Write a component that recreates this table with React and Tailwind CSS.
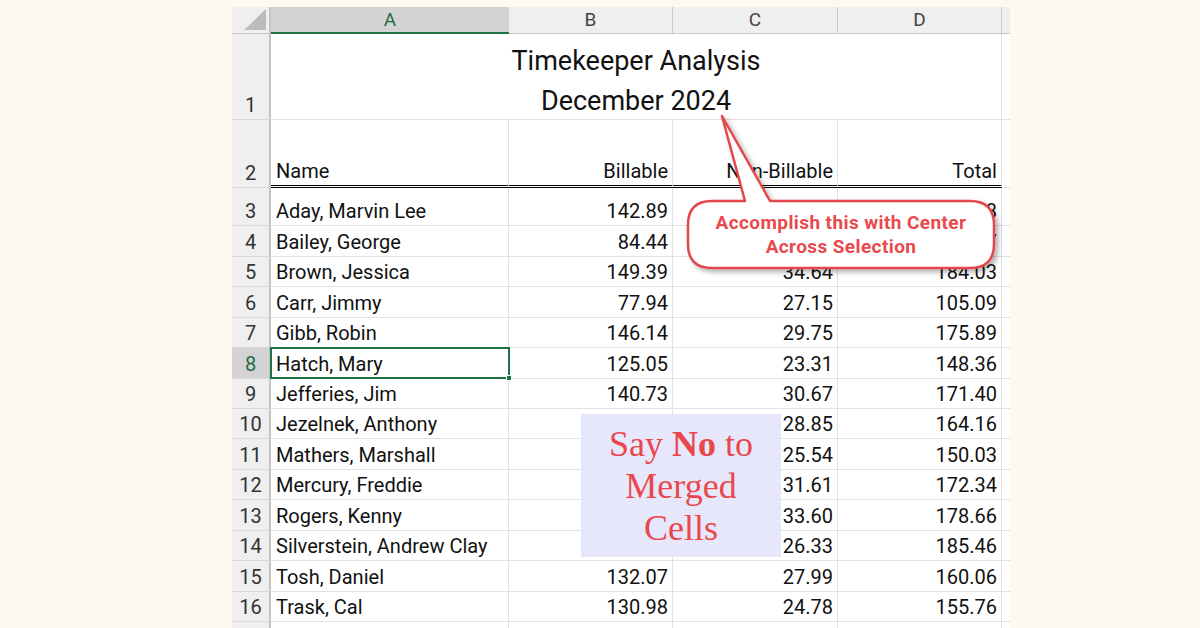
const rows = [
  { n: 3, name: 'Aday, Marvin Lee', b: '142.89', c: '30.59', d: '173.48', h: 'h-[38px]' },
  { n: 4, name: 'Bailey, George', b: '84.44', c: '22.43', d: '106.87', h: 'h-[31px]' },
  { n: 5, name: 'Brown, Jessica', b: '149.39', c: '34.64', d: '184.03', h: 'h-[30px]' },
  { n: 6, name: 'Carr, Jimmy', b: '77.94', c: '27.15', d: '105.09', h: 'h-[31px]' },
  { n: 7, name: 'Gibb, Robin', b: '146.14', c: '29.75', d: '175.89', h: 'h-[30px]' },
  { n: 8, name: 'Hatch, Mary', b: '125.05', c: '23.31', d: '148.36', h: 'h-[31px]', sel: true },
  { n: 9, name: 'Jefferies, Jim', b: '140.73', c: '30.67', d: '171.40', h: 'h-[30px]' },
  { n: 10, name: 'Jezelnek, Anthony', b: '135.31', c: '28.85', d: '164.16', h: 'h-[30px]' },
  { n: 11, name: 'Mathers, Marshall', b: '124.49', c: '25.54', d: '150.03', h: 'h-[31px]' },
  { n: 12, name: 'Mercury, Freddie', b: '140.73', c: '31.61', d: '172.34', h: 'h-[30px]' },
  { n: 13, name: 'Rogers, Kenny', b: '145.06', c: '33.60', d: '178.66', h: 'h-[31px]' },
  { n: 14, name: 'Silverstein, Andrew Clay', b: '159.13', c: '26.33', d: '185.46', h: 'h-[30px]' },
  { n: 15, name: 'Tosh, Daniel', b: '132.07', c: '27.99', d: '160.06', h: 'h-[31px]' },
  { n: 16, name: 'Trask, Cal', b: '130.98', c: '24.78', d: '155.76', h: 'h-[30px]' },
  { n: 0, name: '', b: '', c: '', d: '', h: 'h-[30px]' },
]

function RowHead({ n, sel, className = '' }) {
  return (
    <div
      className={`w-[39px] shrink-0 flex items-end justify-center pb-[2px] border-b border-r-2 border-b-[#d9d9d9] border-r-[#c4c4c4] leading-[24px] ${
        sel ? 'bg-[#d3d3d3] text-[#1d6b40]' : 'bg-[#efefef] text-[#333]'
      } ${className}`}
    >
      {n > 0 ? n : ''}
    </div>
  )
}

function Cell({ children, w, right, className = '' }) {
  return (
    <div
      className={`${w} shrink-0 flex items-end pb-[2px] border-b border-r border-[#e1e1e1] leading-[24px] whitespace-nowrap ${
        right ? 'justify-end pr-[4px]' : 'pl-[5px]'
      } ${className}`}
    >
      {children}
    </div>
  )
}

export default function App() {
  return (
    <div
      className="relative w-[1200px] h-[628px] overflow-hidden bg-[#fdf9f0] pt-[7px] pl-[232px] text-[20px] text-[#111]"
      style={{ fontFamily: 'Roboto, "Liberation Sans", sans-serif' }}
    >
      <div className="w-[778px] bg-white">
        {/* column headers */}
        <div className="flex h-[27px] text-[19px] text-[#444] leading-[24px]">
          <div className="relative w-[39px] shrink-0 bg-[#efefef] border-r-2 border-b border-[#c4c4c4]">
            <div className="absolute right-[3px] bottom-[3px] w-0 h-0 border-l-[22px] border-l-transparent border-b-[21px] border-b-[#bcbcbc]" />
          </div>
          <div className="w-[238px] shrink-0 flex items-center justify-center bg-[#d3d3d3] text-[#1d6b40] border-b-2 border-[#1f7246]">A</div>
          <div className="w-[164px] shrink-0 flex items-center justify-center bg-[#efefef] border-r border-b border-[#c9c9c9]">B</div>
          <div className="w-[165px] shrink-0 flex items-center justify-center bg-[#efefef] border-r border-b border-[#c9c9c9]">C</div>
          <div className="w-[164px] shrink-0 flex items-center justify-center bg-[#efefef] border-r border-b border-[#c9c9c9]">D</div>
          <div className="w-[8px] shrink-0 bg-[#efefef] border-b border-[#c9c9c9]" />
        </div>

        {/* row 1: title centered across selection */}
        <div className="flex h-[86px]">
          <RowHead n={1} />
          <div className="w-[731px] shrink-0 flex flex-col items-center justify-end border-b border-r border-[#e1e1e1] text-[27px] leading-[40px]">
            <div className="translate-y-[2px]">Timekeeper Analysis</div>
            <div className="translate-y-[2px]">December 2024</div>
          </div>
          <div className="w-[8px] shrink-0 border-b border-[#e1e1e1]" />
        </div>

        {/* row 2: column titles */}
        <div className="flex h-[68px]">
          <RowHead n={2} />
          <Cell w="w-[238px]" className="border-b-[3px] border-b-black border-double">Name</Cell>
          <Cell w="w-[164px]" right className="border-b-[3px] border-b-black border-double">Billable</Cell>
          <Cell w="w-[165px]" right className="border-b-[3px] border-b-black border-double">Non-Billable</Cell>
          <Cell w="w-[164px]" right className="border-b-[3px] border-b-black border-double">Total</Cell>
          <div className="w-[8px] shrink-0 border-b border-[#e1e1e1]" />
        </div>

        {rows.map((r, i) => (
          <div key={i} className={`flex ${r.h}`}>
            <RowHead n={r.n} sel={r.sel} />
            <Cell w="w-[238px]" className={r.sel ? 'relative' : ''}>
              {r.name}
              {r.sel && (
                <div className="absolute -left-px -top-px w-[240px] h-[calc(100%+2px)] border-2 border-[#1f7246]">
                  <div className="absolute -right-[4px] -bottom-[4px] w-[6px] h-[6px] bg-[#1f7246] border border-white" />
                </div>
              )}
            </Cell>
            <Cell w="w-[164px]" right>{r.b}</Cell>
            <Cell w="w-[165px]" right>{r.c}</Cell>
            <Cell w="w-[164px]" right>{r.d}</Cell>
            <div className="w-[8px] shrink-0 border-b border-[#e1e1e1]" />
          </div>
        ))}
      </div>

      {/* callout */}
      <svg className="absolute left-0 top-0 pointer-events-none" width="1200" height="628">
        <defs>
          <filter id="sh" x="-10%" y="-10%" width="130%" height="140%">
            <feDropShadow dx="3" dy="3" stdDeviation="2.5" floodColor="#000" floodOpacity="0.3" />
          </filter>
        </defs>
        <path
          d="M712 201 L745 201 L722 116 L770 201 L970 201 Q994 201 994 225 L994 244 Q994 268 970 268 L712 268 Q688 268 688 244 L688 225 Q688 201 712 201 Z"
          fill="#fff"
          stroke="#e4474b"
          strokeWidth="2.5"
          strokeLinejoin="round"
          filter="url(#sh)"
        />
      </svg>
      <div className="absolute left-[688px] top-[201px] w-[306px] h-[67px] flex flex-col items-center justify-center text-[19px] font-bold leading-[24px] tracking-[0.4px] text-[#e8494c]">
        <div>Accomplish this with Center</div>
        <div>Across Selection</div>
      </div>

      {/* note box */}
      <div
        className="absolute left-[581px] top-[414px] w-[200px] h-[143px] bg-[#e7e7fb] flex flex-col items-center justify-center text-[36px] leading-[42px] text-[#e9474b]"
        style={{ fontFamily: '"Liberation Serif", serif' }}
      >
        <div>
          Say <span className="font-bold">No</span> to
        </div>
        <div>Merged</div>
        <div>Cells</div>
      </div>
    </div>
  )
}
